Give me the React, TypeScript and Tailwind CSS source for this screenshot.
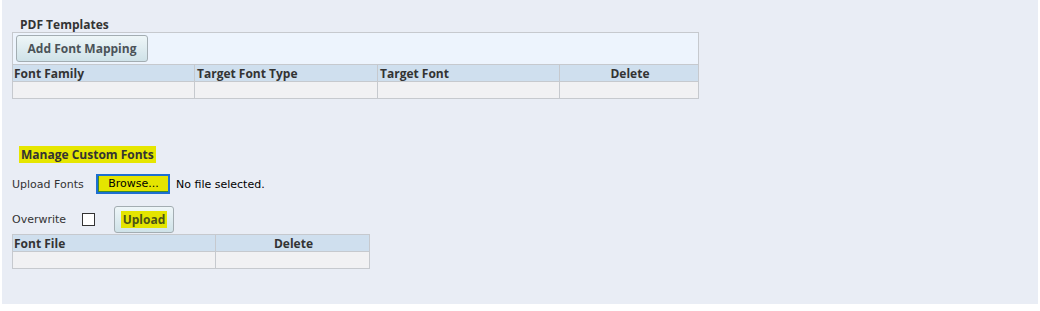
import React from "react";

const regular = { fontFamily: '"DejaVu Sans", Verdana, sans-serif' };
const boldFont = { fontFamily: '"Open Sans", "Liberation Sans", Arial, sans-serif' };

function Cell({ children, first, center, header }: { children?: React.ReactNode; first?: boolean; center?: boolean; header?: boolean }) {
  return (
    <div
      style={header ? boldFont : undefined}
      className={`h-[16px] overflow-hidden whitespace-nowrap ${first ? "pl-[1px]" : "border-l border-[#c6c9ce] pl-[2px]"} ${center ? "text-center" : ""} ${header ? "bg-[#cfdfee] font-bold text-[12px] text-[#333] pt-px leading-[15px]" : "bg-[#f1f1f3]"}`}
    >
      {children}
    </div>
  );
}

export default function App() {
  return (
    <div className="w-[1040px] h-[311px] bg-white pl-[2px]" style={regular}>
      <div className="w-[1036px] h-[304px] bg-[#e9edf5] flex flex-col">
        <div style={boldFont} className="mt-[18px] ml-[18px] h-[14px] leading-[14px] text-[12px] font-bold text-[#333]">PDF Templates</div>

        <div className="ml-[10px] w-[687px] border border-[#c6c9ce] flex flex-col">
          <div className="h-[31px] bg-[#edf4fd] flex items-start">
            <button style={boldFont} className="mt-[2px] ml-[3px] h-[27px] w-[132px] rounded-[3px] border border-[#a3adb2] bg-gradient-to-b from-[#eef6f8] to-[#cfe2e8] text-[12px] font-bold text-[#4b5358] leading-[25px]">
              Add Font Mapping
            </button>
          </div>
          <div className="grid grid-cols-[181px_183px_182px_139px] border-t border-[#c6c9ce]">
            <Cell first header>Font Family</Cell>
            <Cell header>Target Font Type</Cell>
            <Cell header>Target Font</Cell>
            <Cell header center>Delete</Cell>
          </div>
          <div className="grid grid-cols-[181px_183px_182px_139px] border-t border-[#c6c9ce]">
            <Cell first />
            <Cell />
            <Cell />
            <Cell />
          </div>
        </div>

        <div style={boldFont} className="mt-[47px] ml-[17px] self-start h-[17px] leading-[17px] px-[2px] bg-[#e6e600] text-[12px] font-bold text-[#333]">
          Manage Custom Fonts
        </div>

        <div className="mt-[11px] ml-[10px] h-[20px] flex items-center text-[11px]">
          <span className="w-[84px] text-[#333] pt-[2px]">Upload Fonts</span>
          <div className="w-[74px] h-[20px] border-2 border-[#1d6fd2] flex">
            <div className="flex-1 border-l border-b border-[#3d8a2c] bg-[#e4e400] text-black text-center leading-[16px]">Browse...</div>
          </div>
          <span className="ml-[6px] text-black pt-[2px]">No file selected.</span>
        </div>

        <div className="mt-[12px] ml-[10px] h-[27px] flex items-center text-[11px]">
          <span className="w-[70px] text-[#333] pt-[2px]">Overwrite</span>
          <div className="w-[13px] h-[13px] border border-[#333] bg-white" />
          <button className="ml-[19px] h-[27px] w-[60px] rounded-[3px] border border-[#a3adb2] bg-gradient-to-b from-[#eef6f8] to-[#cfe2e8] flex items-center justify-center">
            <span style={boldFont} className="h-[17px] leading-[17px] px-[2px] bg-[#e4e400] text-[12px] font-bold text-[#4b5316]">Upload</span>
          </button>
        </div>

        <div className="mt-[1px] ml-[10px] w-[358px] border border-[#c6c9ce] flex flex-col">
          <div className="grid grid-cols-[202px_154px]">
            <Cell first header>Font File</Cell>
            <Cell header center>Delete</Cell>
          </div>
          <div className="grid grid-cols-[202px_154px] border-t border-[#c6c9ce]">
            <Cell first />
            <Cell />
          </div>
        </div>
      </div>
    </div>
  );
}
